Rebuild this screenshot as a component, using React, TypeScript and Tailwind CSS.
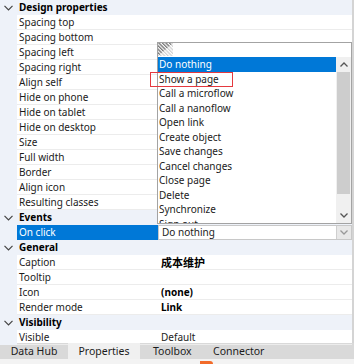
import React from "react";

type Row =
  | { kind: "head"; label: string }
  | { kind: "prop"; label: string; value?: string; bold?: boolean; selected?: boolean; cjk?: boolean };

const rows: Row[] = [
  { kind: "head", label: "Design properties" },
  { kind: "prop", label: "Spacing top" },
  { kind: "prop", label: "Spacing bottom" },
  { kind: "prop", label: "Spacing left" },
  { kind: "prop", label: "Spacing right" },
  { kind: "prop", label: "Align self" },
  { kind: "prop", label: "Hide on phone" },
  { kind: "prop", label: "Hide on tablet" },
  { kind: "prop", label: "Hide on desktop" },
  { kind: "prop", label: "Size" },
  { kind: "prop", label: "Full width" },
  { kind: "prop", label: "Border" },
  { kind: "prop", label: "Align icon" },
  { kind: "prop", label: "Resulting classes" },
  { kind: "head", label: "Events" },
  { kind: "prop", label: "On click", selected: true },
  { kind: "head", label: "General" },
  { kind: "prop", label: "Caption", value: "成本维护", bold: true, cjk: true },
  { kind: "prop", label: "Tooltip" },
  { kind: "prop", label: "Icon", value: "(none)", bold: true },
  { kind: "prop", label: "Render mode", value: "Link", bold: true },
  { kind: "head", label: "Visibility" },
  { kind: "prop", label: "Visible", value: "Default" },
];

const options = [
  "Do nothing",
  "Show a page",
  "Call a microflow",
  "Call a nanoflow",
  "Open link",
  "Create object",
  "Save changes",
  "Cancel changes",
  "Close page",
  "Delete",
  "Synchronize",
  "Sign out",
];

function Chevron() {
  return (
    <svg width="9" height="6" viewBox="0 0 9 6" className="ml-[4px]">
      <polyline points="0.5,0.8 4.5,4.8 8.5,0.8" fill="none" stroke="#444" strokeWidth="1.2" />
    </svg>
  );
}

function Caret({ up, color = "#555" }: { up?: boolean; color?: string }) {
  return (
    <svg width="8" height="5" viewBox="0 0 8 5">
      <polyline
        points={up ? "0.5,4.5 4,1 7.5,4.5" : "0.5,0.5 4,4 7.5,0.5"}
        fill="none"
        stroke={color}
        strokeWidth="1.3"
      />
    </svg>
  );
}

function Hatch() {
  return (
    <svg width="15" height="13" viewBox="0 0 15 13">
      <defs>
        <pattern id="h" width="2.5" height="2.5" patternUnits="userSpaceOnUse" patternTransform="rotate(-45)">
          <rect width="1.2" height="2.5" fill="#777" />
        </pattern>
        <clipPath id="c">
          <polygon points="0,0 15,0 0,13" />
        </clipPath>
      </defs>
      <rect width="15" height="13" fill="url(#h)" clipPath="url(#c)" />
      <rect width="15" height="13" fill="url(#h)" opacity="0.35" />
    </svg>
  );
}

export default function App() {
  return (
    <div
      className="relative w-[354px] h-[364px] bg-white overflow-hidden text-[10px] leading-[15px] text-[#1b1b1b]"
      style={{ fontFamily: '"Noto Sans", "Noto Sans CJK SC", sans-serif' }}
    >
      <div className="flex h-[343px]">
        <div className="flex flex-col w-[352px]">
          {rows.map((r, i) =>
            r.kind === "head" ? (
              <div key={i} className="flex items-center h-[15px] bg-[#eef2f9]">
                <div className="w-[17px] flex items-center">
                  <Chevron />
                </div>
                <span className="font-bold text-black pl-[2px]">{r.label}</span>
              </div>
            ) : (
              <div key={i} className="flex h-[15px]">
                <div className="w-[17px] bg-[#eef2f9]" />
                <div
                  className={
                    "w-[141px] h-[15px] pl-[2px] border-b " +
                    (r.selected ? "bg-[#0078d7] text-white border-[#0078d7]" : "border-[#ececec]")
                  }
                >
                  {r.label}
                </div>
                {r.selected ? (
                  <div className="flex-1 flex h-[15px] border border-[#c8c8c8] bg-white">
                    <span className="flex-1 pl-[3px] leading-[13px]">Do nothing</span>
                    <div className="w-[15px] flex items-center justify-center bg-[#e8e8e8] border-l border-[#cfcfcf]">
                      <Caret color="#999" />
                    </div>
                  </div>
                ) : (
                  <div
                    className={
                      "flex-1 h-[15px] pl-[3px] border-b border-[#ececec] " +
                      (r.bold ? "font-bold text-black " : "") +
                      (r.cjk ? "text-[11px]" : "")
                    }
                  >
                    {r.value}
                  </div>
                )}
              </div>
            )
          )}
        </div>
        <div className="w-[2px] bg-[#d4d4d4]" />
      </div>

      <div className="flex h-[16px] bg-[#d9d9d9] items-center text-[#1b1b1b] text-[10.5px] leading-[16px]">
        <div className="w-[68px] text-center">Data Hub</div>
        <div className="w-[72px] h-full text-center bg-[#f0f0f0]">Properties</div>
        <div className="pl-[13px] w-[62px]">Toolbox</div>
        <div className="pl-[11px]">Connector</div>
      </div>
      <div className="h-[5px] bg-[#f3f3f3] relative">
        <div className="absolute left-[200px] top-[2px] w-[13px] h-[3px] bg-[#f26b2a] rounded-tr-sm" />
      </div>

      {/* open dropdown list */}
      <div className="absolute left-[157px] top-[42px] w-[195px] h-[182px] bg-white border border-[#a3a3a3] flex flex-col">
        <div className="h-[14px] flex items-start">
          <Hatch />
        </div>
        <div className="flex flex-1 min-h-0">
          <div className="flex-1 flex flex-col overflow-hidden">
            {options.map((o, i) => (
              <div
                key={o}
                className={
                  "h-[14.5px] shrink-0 pl-[1px] leading-[14.5px] " +
                  (i === 0 ? "bg-[#0078d7] text-white" : "")
                }
              >
                {o}
              </div>
            ))}
          </div>
          <div className="w-[15px] bg-[#f0f0f0] flex flex-col">
            <div className="h-[15px] flex items-center justify-center">
              <Caret up />
            </div>
            <div className="h-[122px] mx-[1px] bg-[#cdcdcd]" />
            <div className="flex-1" />
            <div className="h-[15px] flex items-center justify-center">
              <Caret />
            </div>
          </div>
        </div>
      </div>

      {/* highlight around "Show a page" */}
      <div className="absolute left-[150px] top-[72px] w-[83px] h-[15px] border border-[#e5393f]" />
    </div>
  );
}
